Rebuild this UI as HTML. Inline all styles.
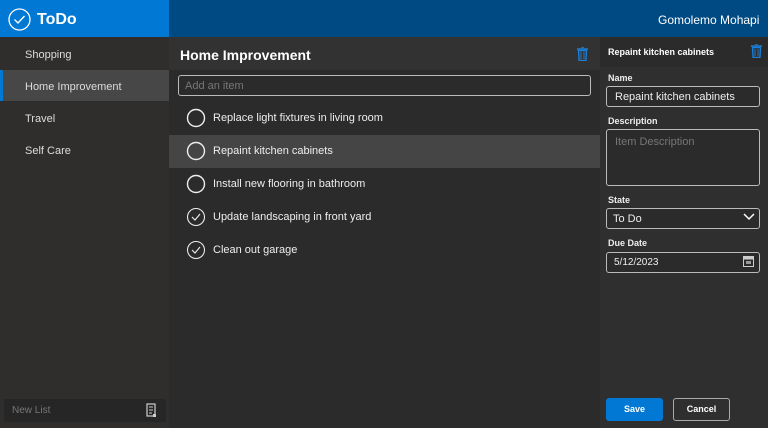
<!DOCTYPE html>
<html><head><style>
*{margin:0;padding:0;box-sizing:border-box}
body{width:768px;height:428px;overflow:hidden;background:#2b2b2b;font-family:"Liberation Sans",sans-serif;color:#fff;position:relative;font-size:11px}
.a{position:absolute}
.row{position:absolute;left:169px;width:431px;height:33px}
.row span{position:absolute;left:44px;top:10px;font-size:11px;color:#eee}
.row svg{position:absolute;left:17px;top:6px}
.lbl{position:absolute;left:608px;font-size:9px;font-weight:bold;color:#eee}
.inp{position:absolute;left:606px;width:154px;border:1px solid #bbb;border-radius:3px;background:#2b2b2b;font-size:11px;padding-left:8px;color:#eee}
</style></head><body>
<div class="a" style="left:0;top:0;width:169px;height:37px;background:#0078d4"></div>
<div class="a" style="left:169px;top:0;width:599px;height:37px;background:#004a83"></div>
<svg class="a" style="left:8px;top:8px" width="23" height="23" viewBox="0 0 23 23"><circle cx="11.5" cy="11.5" r="10.5" fill="none" stroke="#fff" stroke-width="1.3"/><path d="M6.5 11.5l3.5 3.5 6.5-7" fill="none" stroke="#fff" stroke-width="1.4"/></svg>
<div class="a" style="left:37px;top:11px;font-size:16px;font-weight:bold">ToDo</div>
<div class="a" style="left:658px;top:13px;font-size:12px">Gomolemo Mohapi</div>
<div class="a" style="left:0;top:37px;width:169px;height:391px;background:#302e2c"></div>
<div class="a" style="left:0;top:70px;width:169px;height:31px;background:#474747"></div>
<div class="a" style="left:0;top:70px;width:3px;height:31px;background:#0078d4"></div>
<div class="a" style="left:25px;top:49px;font-size:11px;color:#ddd">Shopping</div>
<div class="a" style="left:25px;top:81px;font-size:11px;color:#ddd">Home Improvement</div>
<div class="a" style="left:25px;top:113px;font-size:11px;color:#ddd">Travel</div>
<div class="a" style="left:25px;top:145px;font-size:11px;color:#ddd">Self Care</div>
<div class="a" style="left:4px;top:399px;width:162px;height:23px;background:#262626;border-radius:2px"></div>
<div class="a" style="left:12px;top:405px;font-size:10px;color:#777">New List</div>
<svg class="a" style="left:146px;top:403px" width="11" height="15" viewBox="0 0 11 15"><rect x="1" y="1" width="8" height="12" fill="none" stroke="#ccc" stroke-width="1.2"/><path d="M3 4h4M3 7h4M3 10h3" stroke="#ccc"/><rect x="7" y="11" width="3" height="3" fill="#ccc"/></svg>
<div class="a" style="left:169px;top:37px;width:431px;height:33px;background:#323232"></div>
<div class="a" style="left:180px;top:47px;font-size:14px;font-weight:bold">Home Improvement</div>
<svg class="a" style="left:577px;top:47px" width="11" height="14" viewBox="0 0 11 14"><path d="M0 2h11M4 0h3" stroke="#1a7fd6" stroke-width="1.5"/><path d="M1.5 3.5h8l-.6 10h-6.8z" fill="none" stroke="#1a7fd6" stroke-width="1.4"/><path d="M4 5v7M7 5v7" stroke="#1a7fd6"/></svg>
<div class="a" style="left:178px;top:75px;width:413px;height:21px;border:1px solid #bbb;border-radius:3px"></div>
<div class="a" style="left:185px;top:80px;font-size:11px;color:#777">Add an item</div>
<div class="row" style="top:102px"><svg width="20" height="20"><circle cx="10" cy="10" r="8.5" fill="none" stroke="#eee" stroke-width="1.4"/></svg><span>Replace light fixtures in living room</span></div>
<div class="row" style="top:135px;background:#454545"><svg width="20" height="20"><circle cx="10" cy="10" r="8.5" fill="none" stroke="#eee" stroke-width="1.4"/></svg><span>Repaint kitchen cabinets</span></div>
<div class="row" style="top:168px"><svg width="20" height="20"><circle cx="10" cy="10" r="8.5" fill="none" stroke="#eee" stroke-width="1.4"/></svg><span>Install new flooring in bathroom</span></div>
<div class="row" style="top:201px"><svg width="20" height="20"><circle cx="10" cy="10" r="8.5" fill="none" stroke="#eee" stroke-width="1.1"/><path d="M6 10l3 3 5-6" fill="none" stroke="#eee" stroke-width="1.1"/></svg><span>Update landscaping in front yard</span></div>
<div class="row" style="top:234px"><svg width="20" height="20"><circle cx="10" cy="10" r="8.5" fill="none" stroke="#eee" stroke-width="1.1"/><path d="M6 10l3 3 5-6" fill="none" stroke="#eee" stroke-width="1.1"/></svg><span>Clean out garage</span></div>
<div class="a" style="left:600px;top:37px;width:168px;height:391px;background:#2f2f2f"></div>
<div class="a" style="left:600px;top:37px;width:168px;height:30px;background:#2b2b2b"></div>
<div class="a" style="left:608px;top:47px;font-size:9px;font-weight:bold">Repaint kitchen cabinets</div>
<svg class="a" style="left:751px;top:44px" width="11" height="14" viewBox="0 0 11 14"><path d="M0 2h11M4 0h3" stroke="#1a7fd6" stroke-width="1.5"/><path d="M1.5 3.5h8l-.6 10h-6.8z" fill="none" stroke="#1a7fd6" stroke-width="1.4"/><path d="M4 5v7M7 5v7" stroke="#1a7fd6"/></svg>
<div class="lbl" style="top:73px">Name</div>
<div class="inp" style="top:86px;height:21px;line-height:20px">Repaint kitchen cabinets</div>
<div class="lbl" style="top:116px">Description</div>
<div class="inp" style="top:129px;height:57px;padding-top:6px;color:#777">Item Description</div>
<div class="lbl" style="top:195px">State</div>
<div class="inp" style="top:208px;height:21px;line-height:20px;padding-left:6px">To Do</div>
<svg class="a" style="left:743px;top:213px" width="12" height="8"><path d="M1 1l5 5 5-5" fill="none" stroke="#fff" stroke-width="1.5"/></svg>
<div class="lbl" style="top:238px">Due Date</div>
<div class="inp" style="top:252px;height:21px;line-height:20px;font-size:10px;padding-left:7px">5/12/2023</div>
<svg class="a" style="left:743px;top:256px" width="11" height="11"><rect x="0.5" y="0.5" width="10" height="10" fill="none" stroke="#ccc"/><rect x="0.5" y="0.5" width="10" height="3" fill="#ccc"/><rect x="3" y="5" width="5" height="3" fill="#999"/></svg>
<div class="a" style="left:606px;top:398px;width:57px;height:23px;background:#0078d4;border-radius:3px;font-size:9px;font-weight:bold;text-align:center;line-height:23px">Save</div>
<div class="a" style="left:673px;top:398px;width:57px;height:23px;border:1px solid #aaa;border-radius:3px;font-size:9px;font-weight:bold;text-align:center;line-height:21px">Cancel</div>
</body></html>
